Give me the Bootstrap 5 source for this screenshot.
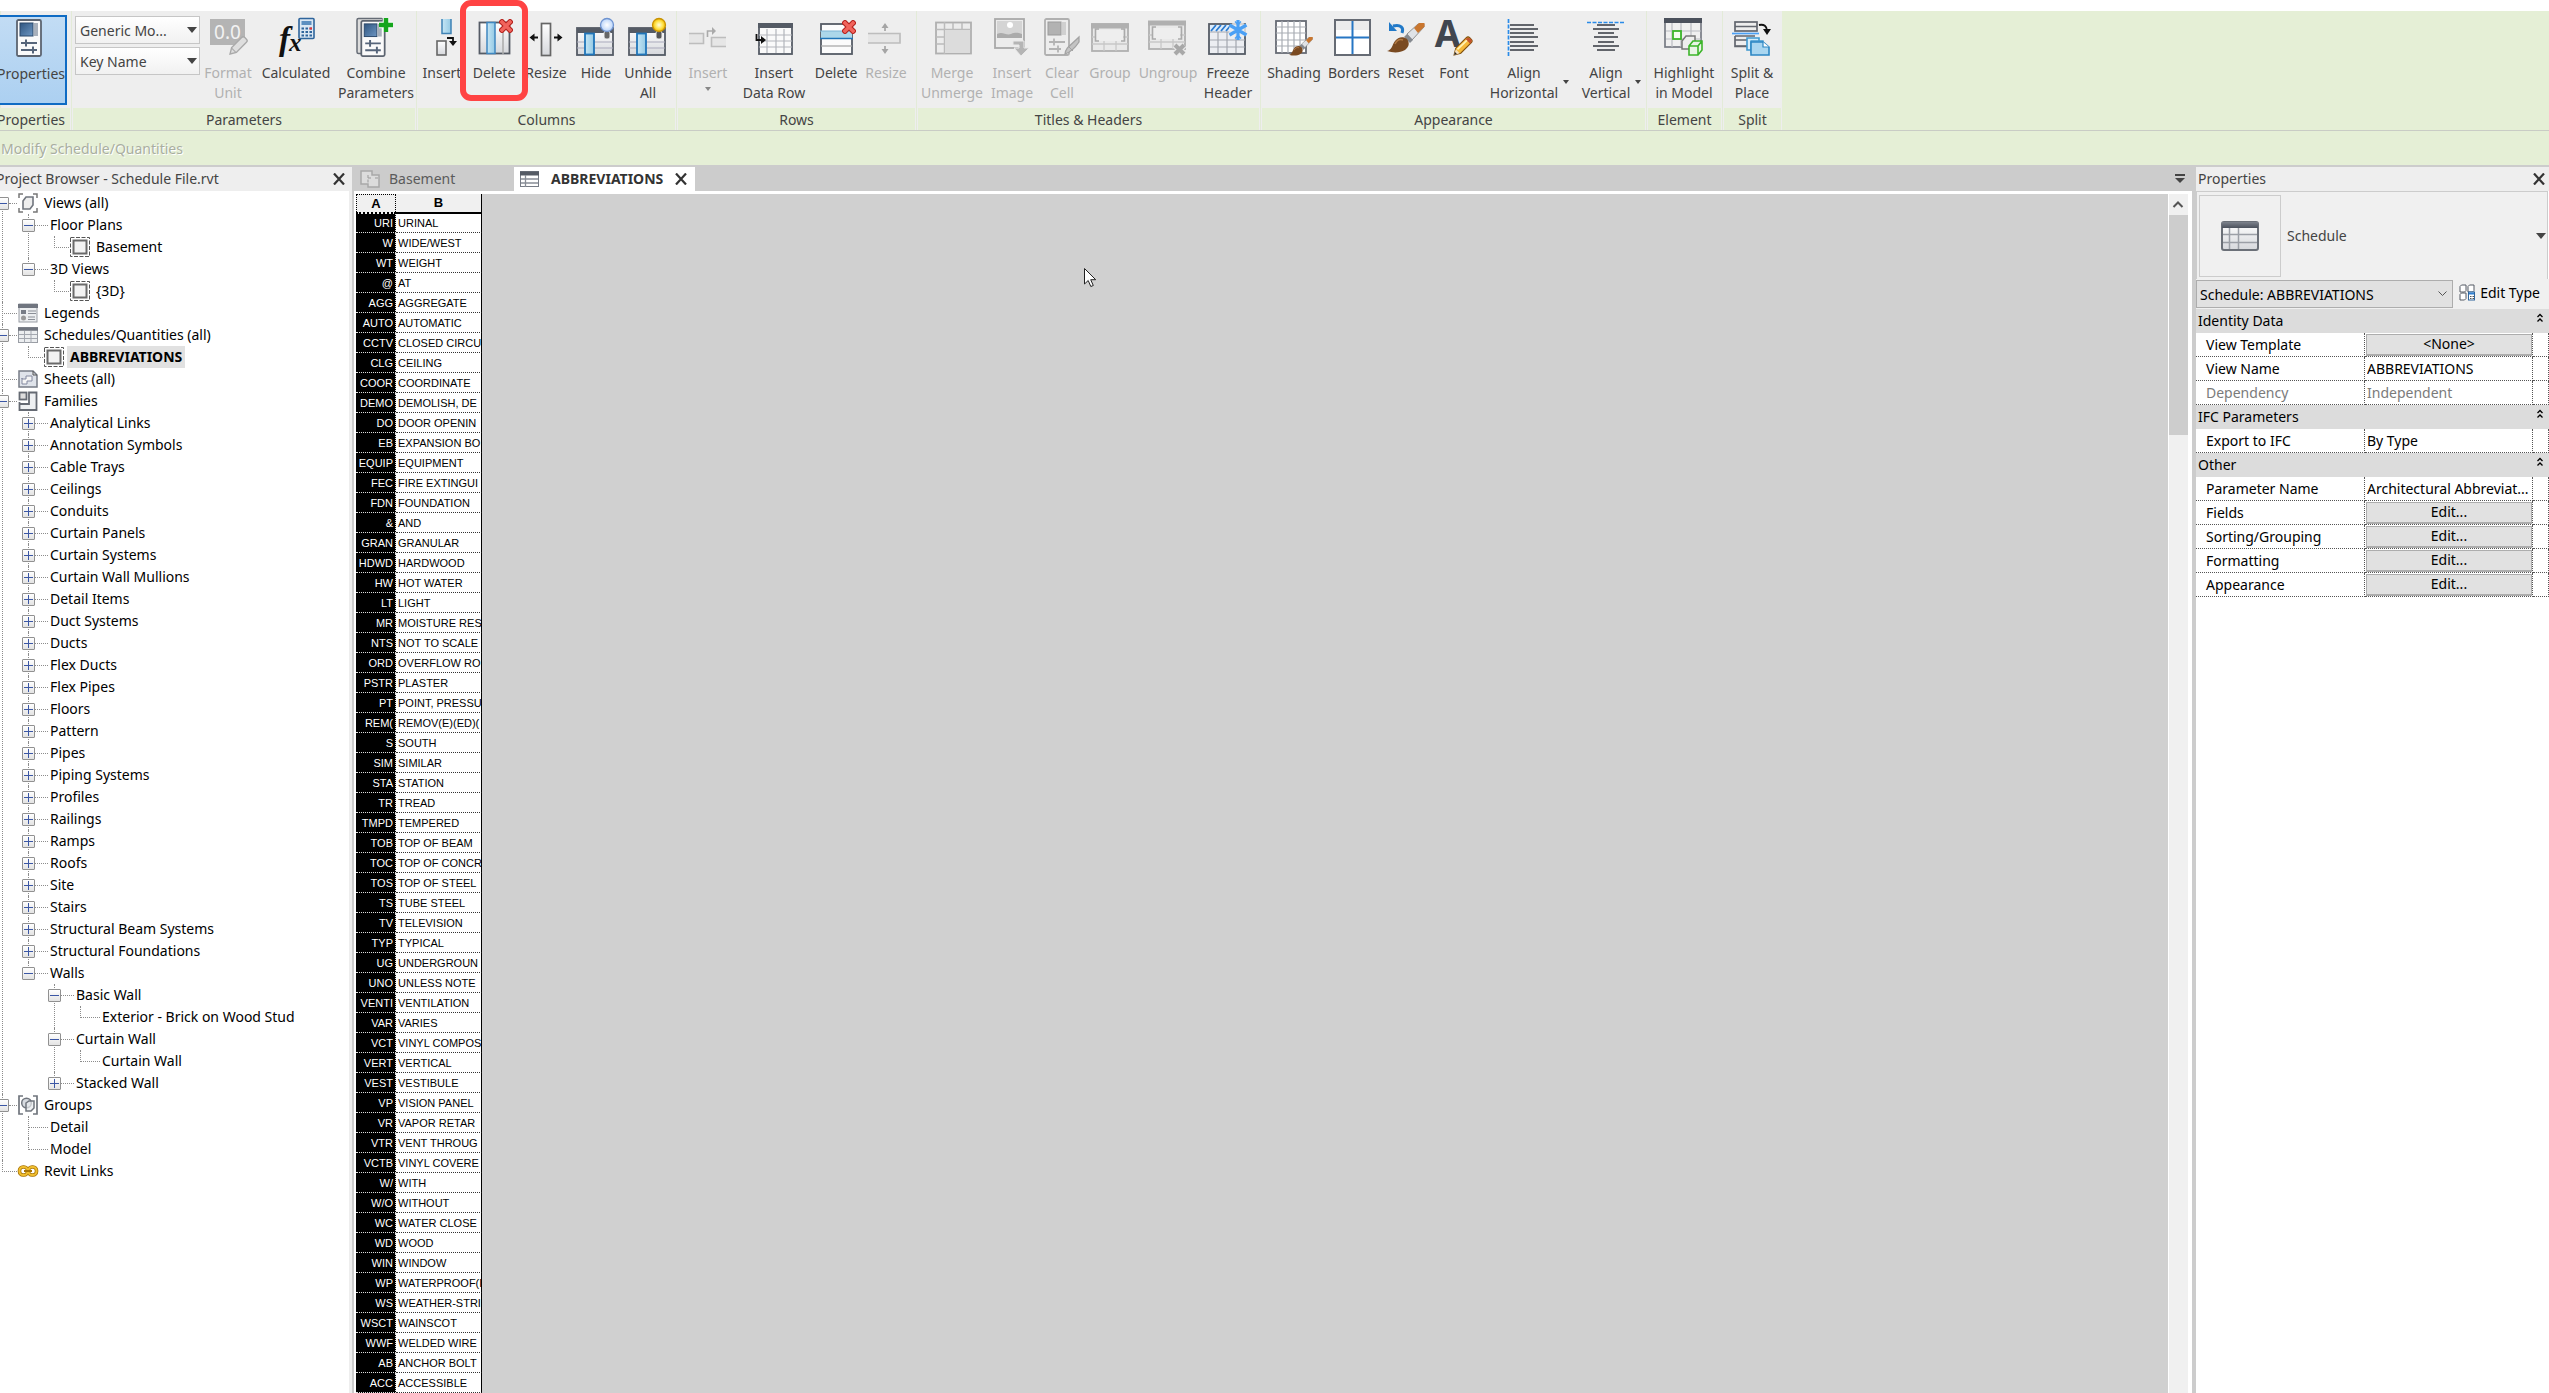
<!DOCTYPE html>
<html lang="en">
<head>
<meta charset="utf-8">
<meta name="viewport" content="width=device-width, initial-scale=1">
<title>Modify Schedule/Quantities</title>
<link href="https://cdn.jsdelivr.net/npm/bootstrap@5.3.0/dist/css/bootstrap.min.css" rel="stylesheet">
<style>
:root{--green:#e5efd6;--bar:#eee;--line:#ccc;--ink:#444}
body{font:14px/20px "Noto Sans","Open Sans",sans-serif;color:#000;background:#fff}
button,select,input{font:inherit;color:inherit}
svg{display:block;flex:none;overflow:visible}
ul{list-style:none;margin:0;padding:0}
/* ribbon */
.ribbon{margin-top:11px;background:var(--green);border-bottom:1px solid #c9ccc5;color:var(--ink)}
.rpanel{background:var(--bar);box-shadow:inset 1px 0 #e3ebd8;padding-top:1px}
.rpanel>div:first-child{height:96px}
.rpanel>.rlabel{height:22px;line-height:24px;background:var(--green);margin:0 1px 0 2px;text-align:center}
.rpanel:first-child>.rlabel{margin-left:-8px}
.rpanel>.inset{padding:0 4px 0 2px}
.tool{border:0;background:none;padding:5px 0 0;display:flex;flex-direction:column;align-items:center;white-space:nowrap;line-height:20px;position:relative}
.tool span{margin-top:6px}
.tool[disabled]{color:#b1b1b1}
.tool.on{background:linear-gradient(#c2dcf4,#acd0f1);border:2px solid #0f6bc4;padding-top:1px;height:90px;width:72px;margin:3px 4px 0 -5px}
.t44{width:44px}.t48{width:48px}.t52{width:52px}.t56{width:56px}.t60{width:60px}.t64{width:64px}.t72{width:72px}.t76{width:76px}.t80{width:80px}.t92{width:92px}
.hasdrop::after,.pick::after,.sdrop::after{content:"";border:3px solid transparent;border-top:4px solid #444;border-bottom:0}
.hasdrop::after{position:absolute;right:1px;top:68px}
.below::after{position:static;border-top-color:#888;margin-top:4px}
.marker{position:absolute;inset:-12px -8px auto -8px;height:101px;border:6px solid #ff4343;border-radius:11px;z-index:3}
.picks{padding:4px 0 0 4px;width:129px;gap:3px}
.pick{position:relative}
.pick select{appearance:none;width:125px;height:28px;border:1px solid #c6c6c6;background:linear-gradient(#fff,#f1f1f1);padding:2px 4px 0;border-radius:0}
.pick::after{position:absolute;right:3px;top:11px;border-width:6px 5px 0;pointer-events:none}
.options{height:34px;background:var(--green);padding:8px 1px;color:#a9aea1;text-shadow:1px 1px #fff}
/* docked panes */
.work{background:#ccc;padding-top:2px;min-height:0}
.browser{width:352px;background:#fff;border-right:3px solid #eee}
.bar{height:24px;background:var(--bar);color:var(--ink);padding-left:2px}
.closer{border:0;background:none;padding:0;margin-right:4px}
.browser .bar{padding-left:0;margin-right:-3px;white-space:nowrap}
.browser .bar span{margin-left:-4px}
.browser .closer{margin-right:7px}
/* tree */
.tree{margin:1px 0 0 2px}
.tree ul{margin-left:26px}
.tree li{position:relative}
.tree li::before{content:"";position:absolute;left:0;top:0;bottom:0;border-left:1px dotted #8c8c8c}
.tree li:last-child::before{bottom:auto;height:12px}
.tree>li:first-child::before{top:12px}
.node{display:flex;align-items:center;height:22px;position:relative;white-space:nowrap}
.node::before{content:"";width:20px;border-top:1px dotted #8c8c8c;margin-right:2px}
.node:has(svg)::before{width:15px;margin-right:1px}
.node svg{margin-right:6px}
.node.x::before{width:13px}
.node.x:has(svg)::before{width:8px}
.node .ex{order:-1}
.ex{width:13px;height:13px;margin:0 0 0 -6px;border:1px solid #919191;border-radius:1px;padding:0;background:linear-gradient(#fff,#e3e3e3);position:relative}
.ex::before,.ex.plus::after{content:"";position:absolute;left:1px;top:5px;width:9px;height:1px;background:#3b57a5}
.ex.plus::after{left:5px;top:1px;width:1px;height:9px}
.sel{background:#e1e1e1;padding:0 3px;margin-left:-3px;font-weight:700;line-height:22px}
/* canvas */
.doc{padding-left:2px;min-width:0}
.tabs{height:24px}
.dtab{color:#5b5b5b;height:24px;padding-left:6px;width:160px;gap:9px;text-decoration:none}
.dtab.cur{background:#fff;color:#333;font-weight:700;width:auto;gap:12px;padding-right:8px}
.sdrop{width:10px;margin-right:7px;border-top:2px solid #444;height:10px;display:flex;justify-content:center;padding-top:2px}
.sdrop::after{border-width:5px 5px 0}
.sheet{background:#d0d0d0;border-top:3px solid #fff;border-left:2px solid #fff;min-height:0;position:relative}
.grid{table-layout:fixed;width:126px;border-collapse:separate;border-spacing:0;font:11px/19px "Liberation Sans",Arial,sans-serif}
.grid td,.grid tbody th{height:20px;padding:1px 0 0 2px;line-height:18px;overflow:hidden;white-space:nowrap;border-bottom:1px dotted #333;background:#fff;border-right:1px solid #000}
.grid tbody th{background:#000;color:#fff;font-weight:400;text-align:right;padding:1px 2px 0 0;border-bottom-color:#ddd;border-right:1px dotted #ddd}
.grid tbody tr:first-child>*{height:19px;line-height:17px}
.grid thead th{height:20px;line-height:18px;font-size:13px;text-align:center;padding:0;background:#f0f0f0;border-bottom:2px solid #000;border-right:1px solid #000}
.grid thead th:first-child{border:1px dotted #000;border-bottom-width:2px;line-height:17px}
.grid .ca{width:40px}
.vscroll{width:24px;background:#f0f0f0;border-left:1px solid #fff;border-right:4px solid #fff}
.vscroll .up{height:21px;border:0;background:none;padding:0 0 0 4px}
.vscroll .thumb{height:220px;background:#cdcdcd}
.pointer{position:absolute;left:728px;top:74px}
/* properties */
.props{width:357px;background:#fff;border-left:4px solid #ccc}
.typebox{background:#f0f0f0;border:1px solid #ccc;border-width:1px 1px 0;height:88px;padding:3px 1px 3px 2px;color:var(--ink);margin-right:1px}
.thumbbox{width:82px;height:82px;border:1px solid #ccc;display:flex;align-items:center;justify-content:center;margin-right:6px}
.inst{background:#f0f0f0;height:30px}
.inst select{appearance:none;width:257px;height:28px;border:1px solid #adadad;background:#e1e1e1;padding:1px 3px 0;border-radius:0}
.inst label{position:relative}
.inst label svg{position:absolute;right:6px;top:11px}
.edit{border:0;background:none;padding:0;gap:4px;margin:-3px 9px 0 5px}
.plist{table-layout:fixed;width:100%;border-collapse:separate;border-spacing:0}
.plist th{font-weight:400}
.plist td,.plist tbody th{height:24px;padding:0 0 0 10px;line-height:22px;border-bottom:1px dotted #555;border-right:1px dotted #555;white-space:nowrap;overflow:hidden}
.plist td{padding-left:2px}
.plist tr.sec th{background:#dcdcdc;border:0;padding-left:2px;line-height:24px}
.plist tr.sec svg{float:right;margin:4px 6px 0 0}
.plist td button{display:block;width:166px;height:22px;line-height:18px;background:#e1e1e1;border:1px solid #adadad;border-bottom-width:2px;padding:0;margin-left:-1px}
.plist input{border:0;padding:0;width:100%;height:22px;display:block;background:none}
.plist .dim{color:#7b7b7b}
</style>
<script src="https://cdn.jsdelivr.net/npm/bootstrap@5.3.0/dist/js/bootstrap.bundle.min.js"></script>
</head>
<body class="vh-100 d-flex flex-column overflow-hidden">
<svg width="0" height="0" class="position-absolute" aria-hidden="true">
<defs>
<linearGradient id="gw" x2="0" y2="1"><stop stop-color="#fff"/><stop offset="1" stop-color="#d6d8dc"/></linearGradient>
<linearGradient id="gh" x2="0" y2="1"><stop stop-color="#7d828c"/><stop offset="1" stop-color="#4b515c"/></linearGradient>
<linearGradient id="gb" x2="1" y2="1"><stop stop-color="#2f5580"/><stop offset="1" stop-color="#6d96c2"/></linearGradient>
<linearGradient id="gl" x2="1" y2="0"><stop stop-color="#c6e6f5"/><stop offset="1" stop-color="#94c9e4"/></linearGradient>
<radialGradient id="by"><stop stop-color="#fffde0"/><stop offset=".6" stop-color="#ffe34a"/><stop offset="1" stop-color="#efb500"/></radialGradient>
<radialGradient id="bb"><stop stop-color="#fff"/><stop offset="1" stop-color="#b9d4fa"/></radialGradient>
<symbol id="xx" viewBox="0 0 14 14"><path d="M3 3l8 8M11 3l-8 8" stroke="#b3221d" stroke-width="5.6" stroke-linecap="square"/><path d="M3 3l8 8M11 3l-8 8" stroke="#f1645c" stroke-width="3.4" stroke-linecap="square"/></symbol>
<symbol id="brush" viewBox="0 0 38 30"><path d="M20 11l11-10h6v3L25 17z" fill="#dfe2e6" stroke="#777" stroke-width=".8"/><path d="M27 5l5-5h5.500v3.500L31 10z" fill="#c9762e"/><path d="M20 11l6 6-3 3-6-6z" fill="#85898f"/><path d="M0 28c5-1 5-6 8-10 3-4 8-5 12-2 3 4 2 8-2 11-5 3-12 3-18 1z" fill="#7a4a21"/><path d="M8 21c2-4 5-5 8-4" stroke="#b27a44" stroke-width="1.500" fill="none"/></symbol>
<symbol id="pencil" viewBox="0 0 18 18"><path d="M1 17l1.500-6L12 1.500c1-1 2-1 3 0l1.500 1.500c1 1 1 2 0 3L7 15.500z" fill="#f6b93a" stroke="#80500f"/><path d="M11 2.500l4.500 4.500 1-1.500c1-1 .5-2-.5-3L14 1.500z" fill="#c2542c"/><path d="M4 12L12.500 4" stroke="#fff3b5" stroke-width="1.600"/><path d="M1 17l1.500-5 3.500 3.500z" fill="#f4e0c0"/><path d="M1 17l.8-2.500 1.700 1.700z" fill="#222"/></symbol>
<symbol id="gpencil" viewBox="0 0 18 18"><path d="M1 17l1.500-6L12 1.500c1-1 2-1 3 0l1.500 1.500c1 1 1 2 0 3L7 15.500z" fill="#dedede" stroke="#a9a9a9" stroke-width="1.300"/><path d="M2.500 11.500l4 4" stroke="#a9a9a9"/></symbol>
<symbol id="sched" viewBox="0 0 38 30"><rect x="1" y="1" width="36" height="28" rx="2" fill="url(#gw)" stroke="#6b7078" stroke-width="2"/><rect x="1" y="1" width="36" height="6" fill="url(#gh)"/><path d="M2 13.500h34M2 21.500h34" stroke="#9b9fa6" stroke-width="1.500"/><path d="M8.500 7v21M17.500 7v21" stroke="#9b9fa6" stroke-width="1.500"/></symbol>
<symbol id="view" viewBox="0 0 20 20"><rect x=".5" y=".5" width="19" height="19" fill="none" stroke="#555" stroke-dasharray="4 1.500"/><rect x="3.500" y="3.500" width="13" height="13" fill="#f3f3f3" stroke="#6a6a6a" stroke-width="2"/></symbol>
<symbol id="close" viewBox="0 0 12 12"><path d="M1 .5l10 11M11 .5L1 11.500" stroke="#333" stroke-width="2.200"/></symbol>
<symbol id="dbl" viewBox="0 0 6 10"><path d="M.5 4L3 1.500 5.500 4M.5 8.500L3 6l2.500 2.500" fill="none" stroke="#000" stroke-width="1.300"/></symbol>
<symbol id="doc" viewBox="0 0 26 38"><rect x="1" y="1" width="24" height="36" rx="1.500" fill="#fafafa" stroke="#5c6470" stroke-width="1.800"/><rect x="4" y="4" width="13" height="13" fill="url(#gb)" stroke="#2b486a"/><path d="M20 4v13" stroke="#a8b0bb" stroke-width="4"/><path d="M5 24h16M5 31h16M10 20.500v7M17 27.500v7" stroke="#56657a" stroke-width="2"/></symbol>
<symbol id="gdoc" viewBox="0 0 26 38"><rect x="1" y="1" width="24" height="36" rx="1.500" fill="#ededed" stroke="#b0b0b0" stroke-width="1.800"/><rect x="4" y="4" width="13" height="13" fill="#b2b2b2" stroke="#9b9b9b"/><path d="M20 4v13" stroke="#d0d0d0" stroke-width="4"/><path d="M5 24h16M5 31h12M10 20.500v7M14 27.500v7" stroke="#b3b3b3" stroke-width="1.800"/></symbol>
</defs></svg>

<header class="ribbon d-flex">
 <section class="rpanel"><div class="d-flex"><button class="tool on"><svg width="40" height="40" viewBox="0 0 40 40"><use href="#doc" x="5" y="1" width="26" height="38"/></svg><span>Properties</span></button></div><div class="rlabel">Properties</div></section>
 <section class="rpanel"><div class="d-flex">
  <div class="picks d-flex flex-column"><label class="pick"><select aria-label="Parameter category"><option>Generic Mo...</option></select></label><label class="pick"><select aria-label="Parameter"><option>Key Name</option></select></label></div>
  <button class="tool t56" disabled><svg width="40" height="40"><rect x="2" y="2" width="35" height="26" fill="#b4b4b4"/><text x="19.500" y="22" font-size="19" fill="#f2f2f2" text-anchor="middle">0.0</text><use href="#gpencil" x="21" y="19" width="19" height="19"/></svg><span>Format<br>Unit</span></button>
  <button class="tool t80"><svg width="40" height="40"><text x="3" y="33" font-family="Liberation Serif,serif" font-style="italic" font-weight="700" font-size="33" fill="#111">f</text><text x="13" y="34" font-family="Liberation Serif,serif" font-style="italic" font-weight="700" font-size="25" fill="#111">x</text><rect x="23" y="1.500" width="15" height="20" rx="1" fill="#dbe7f3" stroke="#2f659c" stroke-width="1.600"/><rect x="25.500" y="4" width="10" height="4" fill="#5d8fc0"/><path d="M25.500 11.500h2.500m1.500 0h2.500m1.500 0h2.500M25.500 15h2.500m1.500 0h2.500m1.500 0h2.500M25.500 18.500h2.500m1.500 0h2.500m1.500 0h2.500" stroke="#2f659c" stroke-width="2"/><path d="M33.500 11.500h2.500" stroke="#e33" stroke-width="2"/></svg><span>Calculated</span></button>
  <button class="tool t80"><svg width="40" height="40"><rect x="1" y="1.500" width="26" height="35" rx="1.500" fill="#ddd" stroke="#666c76" stroke-width="1.500"/><use href="#doc" x="4" y="3" width="26" height="37"/><path d="M30 1v14M23 8h14" stroke="#fff" stroke-width="6.500"/><path d="M30 1v14M23 8h14" stroke="#15a51c" stroke-width="4.500"/></svg><span>Combine<br>Parameters</span></button>
 </div><div class="rlabel">Parameters</div></section>
 <section class="rpanel"><div class="d-flex">
  <button class="tool t52"><svg width="40" height="40"><path d="M20 2v14.500h9V2" fill="url(#gl)" stroke="#3f82b5" stroke-width="1.500"/><rect x="15" y="24" width="9" height="14" fill="url(#gw)" stroke="#666" stroke-width="1.600"/><path d="M25 21h6v5" fill="none" stroke="#111" stroke-width="1.800"/><path d="M27 24h8l-4 5z" fill="#111"/></svg><span>Insert</span></button>
  <button class="tool t52"><svg width="40" height="40"><rect x="5.500" y="5.500" width="30" height="31" fill="url(#gw)" stroke="#555b65" stroke-width="1.800"/><path d="M29 6v31" stroke="#aaa" stroke-width="1.500"/><rect x="13" y="5.500" width="8" height="31" fill="url(#gl)" stroke="#3f87c0" stroke-width="1.500"/><use href="#xx" x="25" y="2" width="14" height="14"/></svg><span>Delete</span><i class="marker"></i></button>
  <button class="tool t52"><svg width="40" height="40"><rect x="15.500" y="6.500" width="9" height="32" fill="url(#gw)" stroke="#666" stroke-width="1.700"/><path d="M5 20.500h7M28 20.500h7" stroke="#111" stroke-width="1.800"/><path d="M3.500 20.500l5-4v8zM36.500 20.500l-5-4v8z" fill="#111"/></svg><span>Resize</span></button>
  <button class="tool t48"><svg width="40" height="40"><rect x="1" y="11" width="36" height="27" fill="url(#gw)" stroke="#555b65" stroke-width="1.800"/><path d="M1 25h36M1 31h36" stroke="#aab" stroke-width="1.200"/><path d="M1 13.500h36" stroke="#555b65" stroke-width="5"/><rect x="9" y="16.500" width="9" height="21" fill="url(#gl)" stroke="#1f74b8" stroke-width="1.800"/><rect x="28" y="14" width="6" height="8" rx="2" fill="#666" stroke="#eee"/><circle cx="31" cy="8" r="6.500" fill="url(#bb)" stroke="#6e93d0" stroke-width="1.300"/></svg><span>Hide</span></button>
  <button class="tool t56"><svg width="40" height="40"><rect x="1" y="11" width="36" height="27" fill="url(#gw)" stroke="#555b65" stroke-width="1.800"/><path d="M1 25h36M1 31h36" stroke="#aab" stroke-width="1.200"/><path d="M1 13.500h36" stroke="#555b65" stroke-width="5"/><rect x="9" y="16.500" width="9" height="21" fill="url(#gl)" stroke="#1f74b8" stroke-width="1.800"/><rect x="28" y="14" width="6" height="8" rx="2" fill="#555" stroke="#eee"/><circle cx="31" cy="8" r="6.500" fill="url(#by)" stroke="#c89200" stroke-width="1.300"/></svg><span>Unhide<br>All</span></button>
 </div><div class="rlabel">Columns</div></section>
 <section class="rpanel"><div class="d-flex px-1">
  <button class="tool t56 hasdrop below" disabled><svg width="40" height="40"><path d="M1 16.500h14.500v10H1M38 20.500H23.500v9H38" fill="#e6e6e6" stroke="#bdbdbd" stroke-width="1.600"/><path d="M19.500 20v-6h5" fill="none" stroke="#aaa" stroke-width="1.600"/><path d="M24 10l4 4-4 4z" fill="#aaa"/></svg><span>Insert</span></button>
  <button class="tool t76"><svg width="40" height="40"><rect x="5" y="7" width="33" height="30" fill="#fafafa" stroke="#555b65" stroke-width="1.800"/><path d="M13 12v24M22 12v24M30 12v24M5 18h33M5 24h33M5 30h33" stroke="#b3b6bc" stroke-width="1.200"/><path d="M4 8.500h35" stroke="#555b65" stroke-width="5"/><path d="M2.500 17v6h6" fill="none" stroke="#111" stroke-width="1.800"/><path d="M7 19l5 4-5 4z" fill="#111"/></svg><span>Insert<br>Data Row</span></button>
  <button class="tool t48"><svg width="40" height="40"><rect x="5" y="7" width="31" height="30" fill="#fcfcfc" stroke="#555b65" stroke-width="1.800"/><path d="M5 29h31" stroke="#aaa" stroke-width="1.300"/><rect x="5" y="14" width="31" height="7" fill="#acd7ea"/><path d="M4 21.500h33" stroke="#1f74b8" stroke-width="1.600"/><path d="M4 14h33" stroke="#7fb6d6"/><use href="#xx" x="26" y="3" width="14" height="14"/></svg><span>Delete</span></button>
  <button class="tool t52" disabled><svg width="40" height="40"><path d="M2 16.500h32v9.500H2" fill="#e6e6e6" stroke="#bdbdbd" stroke-width="1.700"/><path d="M19 9v5M19 29v5" stroke="#a5a5a5" stroke-width="1.700"/><path d="M15.500 11l3.500-5 3.500 5zM15.500 32l3.500 5 3.500-5z" fill="#a5a5a5"/></svg><span>Resize</span></button>
 </div><div class="rlabel">Rows</div></section>
 <section class="rpanel"><div class="d-flex px-1">
  <button class="tool t64" disabled><svg width="40" height="40"><rect x="4" y="5.500" width="35" height="31" fill="#ececec" stroke="#b0b0b0" stroke-width="1.800"/><path d="M12.500 5v32M4 12.500h35M21 6v6M30 6v6M4 20h8M4 27h8" stroke="#bbb" stroke-width="1.500"/><rect x="13" y="13" width="25" height="23" fill="#dcdcdc"/></svg><span>Merge<br>Unmerge</span></button>
  <button class="tool t56" disabled><svg width="40" height="40"><rect x="3" y="2" width="29" height="29" fill="#ececec" stroke="#a9a9a9" stroke-width="1.800"/><rect x="5" y="4" width="25" height="16" fill="#d4d4d4"/><circle cx="18" cy="8" r="3" fill="#fff"/><path d="M5 17c6-3 9 2 14 0s7-1 11 0v4H5z" fill="#ababab"/><path d="M21 24h11v7h5l-8 8-7-8h5v-3h-6z" fill="#b5b5b5" stroke="#e9e9e9"/></svg><span>Insert<br>Image</span></button>
  <button class="tool t44" disabled><svg width="40" height="40"><use href="#gdoc" x="2" y="1" width="26" height="38"/><path d="M23 37c1-7 5-8 14-17v5c-4 6-8 10-14 12z" fill="#c4c4c4" stroke="#a3a3a3" stroke-width="1.300"/><path d="M27 30l4 4" stroke="#a3a3a3"/></svg><span>Clear<br>Cell</span></button>
  <button class="tool t52" disabled><svg width="40" height="40"><rect x="2" y="7" width="36" height="27" fill="#e9e9e9" stroke="#b0b0b0" stroke-width="1.800"/><path d="M1 9h38" stroke="#b0b0b0" stroke-width="5"/><path d="M2 27h36M14 24v10M26 24v10M2 20h36" stroke="#c8c8c8" stroke-width="1.300"/><rect x="6" y="13" width="27" height="11" fill="#eee"/><path d="M9 12H5.500v12H9M31 12h3.500v12H31" fill="none" stroke="#aaa" stroke-width="1.600"/></svg><span>Group</span></button>
  <button class="tool t64" disabled><svg width="40" height="40"><rect x="1" y="5" width="36" height="27" fill="#e9e9e9" stroke="#b0b0b0" stroke-width="1.800"/><path d="M0 6h38" stroke="#b0b0b0" stroke-width="5"/><path d="M1 25h36M13 22v10M25 22v10M1 18h36" stroke="#c8c8c8" stroke-width="1.300"/><rect x="5" y="11" width="27" height="11" fill="#eee"/><path d="M8 10H4.500v12H8M30 10h3.500v12H30" fill="none" stroke="#aaa" stroke-width="1.600"/><path d="M27 28l9 9M36 28l-9 9" stroke="#e9e9e9" stroke-width="6.500"/><path d="M27 28l9 9M36 28l-9 9" stroke="#a8a8a8" stroke-width="4"/></svg><span>Ungroup</span></button>
  <button class="tool t56"><svg width="40" height="40"><rect x="1" y="7" width="36" height="30" fill="#eceef2" stroke="#555b65" stroke-width="1.800"/><path d="M2 15h35M2 23h35M2 30h35M10 15v21M19 15v21M28 15v21" stroke="#a3a7af" stroke-width="1.200"/><rect x="2" y="8" width="34" height="6" fill="#dcecfb"/><path d="M3 14l5-6M8 14l5-6M13 14l5-6M18 14l5-6" stroke="#2b7bd0" stroke-width="1.800"/><circle cx="30" cy="13" r="9" fill="#eee" opacity=".8"/><path d="M30 3v20M21.500 8l17 10M38.500 8l-17 10" stroke="#4aa0f5" stroke-width="3.200"/><path d="M27 4.500l3 3 3-3M27 21.500l3-3 3 3" stroke="#4aa0f5" stroke-width="1.500" fill="none"/></svg><span>Freeze<br>Header</span></button>
 </div><div class="rlabel">Titles &amp; Headers</div></section>
 <section class="rpanel"><div class="d-flex inset">
  <button class="tool t64"><svg width="40" height="40"><rect x="2" y="4" width="30" height="32" fill="#fff" stroke="#666b74" stroke-width="1.800"/><path d="M8 4v32M14 4v32M20 4v32M26 4v32M2 10h30M2 16h30M2 23h30M2 29h30" stroke="#a9adb4" stroke-width="1.200"/><use href="#brush" x="15" y="20" width="24" height="19"/></svg><span>Shading</span></button>
  <button class="tool t56"><svg width="40" height="40"><rect x="1" y="3" width="35" height="35" fill="#fff" stroke="#666b74" stroke-width="2"/><rect x="2" y="4" width="33" height="9" fill="#ececec"/><path d="M18.500 4v33M2 20.500h33" stroke="#2676c4" stroke-width="2"/></svg><span>Borders</span></button>
  <button class="tool t48"><svg width="40" height="40"><path d="M16 16c2-5-1-9-9-7" stroke="#2179c8" stroke-width="3" fill="none"/><path d="M3 5v9h8z" fill="#2179c8"/><use href="#brush" x="1" y="6" width="38" height="30"/></svg><span>Reset</span></button>
  <button class="tool t48"><svg width="40" height="40"><text x="13.500" y="30" font-family="Noto Sans,sans-serif" font-weight="700" font-size="37" text-anchor="middle" fill="#41464f">A</text><use href="#pencil" x="19" y="19" width="20" height="20"/></svg><span>Font</span></button>
  <button class="tool t92 hasdrop"><svg width="40" height="40"><path d="M4.500 2v37" stroke="#2a8be8" stroke-width="1.700" stroke-dasharray="4 1.500"/><path d="M6 8h24M6 12h28M6 16h24M6 20h28M6 25h24M6 29h28M6 33h24" stroke="#62656b" stroke-width="1.800"/></svg><span>Align<br>Horizontal</span></button>
  <button class="tool t72 hasdrop"><svg width="40" height="40"><path d="M1 5.500h38" stroke="#2a8be8" stroke-width="1.700" stroke-dasharray="4 1.500"/><path d="M11 8h18M7 12h26M12 16h16M8 20h24M12 25h16M7 29h26M11 33h18" stroke="#62656b" stroke-width="1.800"/></svg><span>Align<br>Vertical</span></button>
 </div><div class="rlabel">Appearance</div></section>
 <section class="rpanel"><div class="d-flex">
  <button class="tool t76"><svg width="40" height="40"><rect x="1" y="2" width="36" height="28" fill="#f0f0f0" stroke="#777b84" stroke-width="1.700"/><path d="M2 14h35M2 22h35M8 6v24M17 6v24M27 6v24" stroke="#b9bcc2" stroke-width="1.200"/><path d="M0 3.500h38" stroke="#4b515c" stroke-width="5"/><rect x="9" y="14" width="8" height="8" fill="#f3fff0" stroke="#3cb52a" stroke-width="1.800"/><path d="M18 24l4-5h9v8l-3 5H18z" fill="#eee" stroke="#777" stroke-width="1.500"/><path d="M25 29l4-5h9v9l-4 5h-9zM25 29h9v9M34 29l4-5" fill="#e9f5e6" stroke="#3cb52a" stroke-width="1.600"/></svg><span>Highlight<br>in Model</span></button>
 </div><div class="rlabel">Element</div></section>
 <section class="rpanel"><div class="d-flex">
  <button class="tool t60"><svg width="40" height="40"><rect x="3" y="5" width="22" height="9" fill="#eee" stroke="#62666e" stroke-width="1.700"/><path d="M3 9.500h22M3 23h14M3 29h12" stroke="#62666e" stroke-width="1.400"/><path d="M3 19v10.500h12M3 19h20" fill="none" stroke="#62666e" stroke-width="1.700"/><path d="M0 16.500h27" stroke="#4aa0f5" stroke-width="1.700"/><path d="M27 8c5-1 8 1 8 6" fill="none" stroke="#111" stroke-width="2"/><path d="M31 12h8l-4 6z" fill="#111"/><path d="M15 21h12v12H15z" fill="#d5edfa" stroke="#3f98cf" stroke-width="1.600"/><path d="M19 24h12v11H19z" fill="#d5edfa" stroke="#3f98cf" stroke-width="1.300"/><path d="M19 25h12l6 5v8H19z" fill="#a9d6f0" stroke="#2c87c4" stroke-width="1.600"/><path d="M31 25v5h6" fill="#fff" stroke="#2c87c4" stroke-width="1.200"/></svg><span>Split &amp;<br>Place</span></button>
 </div><div class="rlabel">Split</div></section>
</header>
<div class="options">Modify Schedule/Quantities</div>

<main class="work d-flex flex-grow-1">
<aside class="browser">
 <div class="bar d-flex align-items-center justify-content-between"><span>Project Browser - Schedule File.rvt</span><button class="closer" aria-label="Close project browser"><svg width="12" height="12"><use href="#close"/></svg></button></div>
 <ul class="tree">
  <li><div class="node x"><button class="ex" aria-label="Collapse"></button><svg width="20" height="20"><path d="M1 5V1h4M15 1h4v4M19 15v4h-4M5 19H1v-4" fill="none" stroke="#777" stroke-width="1.500"/><path d="M5 8l3-4h7v8l-3 4H5z" fill="#eee" stroke="#70757d" stroke-width="1.600"/></svg>Views (all)</div>
   <ul>
    <li><div class="node x"><button class="ex" aria-label="Collapse"></button>Floor Plans</div><ul><li><div class="node"><svg width="20" height="20"><use href="#view"/></svg>Basement</div></li></ul></li>
    <li><div class="node x"><button class="ex" aria-label="Collapse"></button>3D Views</div><ul><li><div class="node"><svg width="20" height="20"><use href="#view"/></svg>{3D}</div></li></ul></li>
   </ul></li>
  <li><div class="node"><svg width="20" height="20"><rect x="1" y="1" width="18" height="18" fill="#eceef0" stroke="#9a9ea5"/><path d="M0 3h20" stroke="#70757f" stroke-width="4"/><rect x="3" y="7" width="5" height="4" fill="#777c86"/><circle cx="5.500" cy="15" r="2.500" fill="#999"/><path d="M10 8h8M10 10.500h8M10 14h7M10 16.500h7" stroke="#8b8f97"/></svg>Legends</div></li>
  <li><div class="node x"><button class="ex" aria-label="Collapse"></button><svg width="20" height="16"><rect x=".5" y=".5" width="19" height="15" fill="#eceef0" stroke="#9a9ea5"/><path d="M0 2h20" stroke="#70757f" stroke-width="3.500"/><path d="M1 7.500h18M1 11.500h18M6.500 4v12M13 4v12" stroke="#a4a8b0"/></svg>Schedules/Quantities (all)</div>
   <ul><li><div class="node"><svg width="20" height="20"><use href="#view"/></svg><span class="sel">ABBREVIATIONS</span></div></li></ul></li>
  <li><div class="node"><svg width="20" height="18"><path d="M1 1h14l4 4v12H1z" fill="#dfe3ea" stroke="#777c86" stroke-width="1.500"/><path d="M15 1v4h4" fill="none" stroke="#555"/><path d="M4 8v6h5v-3h5V6H8v3H4z" fill="#f5f5f5" stroke="#8389a0"/></svg>Sheets (all)</div></li>
  <li><div class="node x"><button class="ex" aria-label="Collapse"></button><svg width="20" height="20"><path d="M1.500 11V19h17V1.500H11V13H1.500z" fill="#eef0f2" stroke="#656a73" stroke-width="1.800"/><rect x="1.500" y="1.500" width="7" height="7" fill="#ddd" stroke="#656a73" stroke-width="1.800"/></svg>Families</div>
   <ul>
    <li><div class="node x"><button class="ex plus" aria-label="Expand"></button>Analytical Links</div></li>
    <li><div class="node x"><button class="ex plus" aria-label="Expand"></button>Annotation Symbols</div></li>
    <li><div class="node x"><button class="ex plus" aria-label="Expand"></button>Cable Trays</div></li>
    <li><div class="node x"><button class="ex plus" aria-label="Expand"></button>Ceilings</div></li>
    <li><div class="node x"><button class="ex plus" aria-label="Expand"></button>Conduits</div></li>
    <li><div class="node x"><button class="ex plus" aria-label="Expand"></button>Curtain Panels</div></li>
    <li><div class="node x"><button class="ex plus" aria-label="Expand"></button>Curtain Systems</div></li>
    <li><div class="node x"><button class="ex plus" aria-label="Expand"></button>Curtain Wall Mullions</div></li>
    <li><div class="node x"><button class="ex plus" aria-label="Expand"></button>Detail Items</div></li>
    <li><div class="node x"><button class="ex plus" aria-label="Expand"></button>Duct Systems</div></li>
    <li><div class="node x"><button class="ex plus" aria-label="Expand"></button>Ducts</div></li>
    <li><div class="node x"><button class="ex plus" aria-label="Expand"></button>Flex Ducts</div></li>
    <li><div class="node x"><button class="ex plus" aria-label="Expand"></button>Flex Pipes</div></li>
    <li><div class="node x"><button class="ex plus" aria-label="Expand"></button>Floors</div></li>
    <li><div class="node x"><button class="ex plus" aria-label="Expand"></button>Pattern</div></li>
    <li><div class="node x"><button class="ex plus" aria-label="Expand"></button>Pipes</div></li>
    <li><div class="node x"><button class="ex plus" aria-label="Expand"></button>Piping Systems</div></li>
    <li><div class="node x"><button class="ex plus" aria-label="Expand"></button>Profiles</div></li>
    <li><div class="node x"><button class="ex plus" aria-label="Expand"></button>Railings</div></li>
    <li><div class="node x"><button class="ex plus" aria-label="Expand"></button>Ramps</div></li>
    <li><div class="node x"><button class="ex plus" aria-label="Expand"></button>Roofs</div></li>
    <li><div class="node x"><button class="ex plus" aria-label="Expand"></button>Site</div></li>
    <li><div class="node x"><button class="ex plus" aria-label="Expand"></button>Stairs</div></li>
    <li><div class="node x"><button class="ex plus" aria-label="Expand"></button>Structural Beam Systems</div></li>
    <li><div class="node x"><button class="ex plus" aria-label="Expand"></button>Structural Foundations</div></li>
    <li><div class="node x"><button class="ex" aria-label="Collapse"></button>Walls</div>
     <ul>
      <li><div class="node x"><button class="ex" aria-label="Collapse"></button>Basic Wall</div><ul><li><div class="node">Exterior - Brick on Wood Stud</div></li></ul></li>
      <li><div class="node x"><button class="ex" aria-label="Collapse"></button>Curtain Wall</div><ul><li><div class="node">Curtain Wall</div></li></ul></li>
      <li><div class="node x"><button class="ex plus" aria-label="Expand"></button>Stacked Wall</div></li>
     </ul></li>
   </ul></li>
  <li><div class="node x"><button class="ex" aria-label="Collapse"></button><svg width="20" height="20"><path d="M5 1H1v18h4M15 1h4v18h-4" fill="none" stroke="#70757d" stroke-width="1.700"/><circle cx="8.500" cy="8" r="4.800" fill="#d7dbe0" stroke="#70757d" stroke-width="1.500"/><path d="M8 8l3-2h5v7l-3 3H8z" fill="#e8ebee" fill-opacity=".7" stroke="#70757d" stroke-width="1.500"/></svg>Groups</div>
   <ul><li><div class="node">Detail</div></li><li><div class="node">Model</div></li></ul></li>
  <li><div class="node"><svg width="20" height="12"><rect x="1.500" y="2" width="8" height="8" rx="3.500" fill="none" stroke="#a87406" stroke-width="3.600"/><rect x="10.500" y="2" width="8" height="8" rx="3.500" fill="none" stroke="#a87406" stroke-width="3.600"/><rect x="1.500" y="2" width="8" height="8" rx="3.500" fill="none" stroke="#f0be2e" stroke-width="2"/><rect x="10.500" y="2" width="8" height="8" rx="3.500" fill="none" stroke="#f0be2e" stroke-width="2"/><path d="M6 6h8" stroke="#a87406" stroke-width="2"/></svg>Revit Links</div></li>
 </ul>
</aside>

<section class="doc d-flex flex-column flex-grow-1">
 <nav class="tabs d-flex align-items-center">
  <a href="#basement" class="dtab d-flex align-items-center"><svg width="20" height="18"><path d="M1 1h11v4h7v12H8v-3H1z" fill="#dcdcdc" stroke="#a8a8a8" stroke-width="1.500"/><path d="M8 5v9M8 8h4M15 8h4" stroke="#999" stroke-dasharray="3 1.500"/></svg>Basement</a>
  <a href="#abbreviations" class="dtab cur d-flex align-items-center"><svg width="19" height="16"><rect x=".5" y=".5" width="18" height="15" fill="#fff" stroke="#777c86"/><path d="M0 2.500h19" stroke="#555b65" stroke-width="4"/><path d="M1 8h17M1 12h17M5.500 4v12" stroke="#888d96" stroke-width="1.300"/></svg>ABBREVIATIONS<svg width="12" height="12"><use href="#close"/></svg></a>
  <button class="sdrop ms-auto border-start-0 border-end-0 border-bottom-0 bg-transparent px-0" aria-label="Open views"></button>
 </nav>
 <div class="sheet d-flex justify-content-between flex-grow-1 overflow-hidden">
  <div>
  <table class="grid">
   <colgroup><col class="ca"><col></colgroup>
   <thead><tr><th scope="col">A</th><th scope="col">B</th></tr></thead>
   <tbody>
    <tr><th>URI</th><td>URINAL</td></tr>
    <tr><th>W</th><td>WIDE/WEST</td></tr>
    <tr><th>WT</th><td>WEIGHT</td></tr>
    <tr><th>@</th><td>AT</td></tr>
    <tr><th>AGG</th><td>AGGREGATE</td></tr>
    <tr><th>AUTO</th><td>AUTOMATIC</td></tr>
    <tr><th>CCTV</th><td>CLOSED CIRCU</td></tr>
    <tr><th>CLG</th><td>CEILING</td></tr>
    <tr><th>COOR</th><td>COORDINATE</td></tr>
    <tr><th>DEMO</th><td>DEMOLISH, DE</td></tr>
    <tr><th>DO</th><td>DOOR OPENIN</td></tr>
    <tr><th>EB</th><td>EXPANSION BO</td></tr>
    <tr><th>EQUIP</th><td>EQUIPMENT</td></tr>
    <tr><th>FEC</th><td>FIRE EXTINGUI</td></tr>
    <tr><th>FDN</th><td>FOUNDATION</td></tr>
    <tr><th>&amp;</th><td>AND</td></tr>
    <tr><th>GRAN</th><td>GRANULAR</td></tr>
    <tr><th>HDWD</th><td>HARDWOOD</td></tr>
    <tr><th>HW</th><td>HOT WATER</td></tr>
    <tr><th>LT</th><td>LIGHT</td></tr>
    <tr><th>MR</th><td>MOISTURE RES</td></tr>
    <tr><th>NTS</th><td>NOT TO SCALE</td></tr>
    <tr><th>ORD</th><td>OVERFLOW RO</td></tr>
    <tr><th>PSTR</th><td>PLASTER</td></tr>
    <tr><th>PT</th><td>POINT, PRESSU</td></tr>
    <tr><th>REM(</th><td>REMOV(E)(ED)(</td></tr>
    <tr><th>S</th><td>SOUTH</td></tr>
    <tr><th>SIM</th><td>SIMILAR</td></tr>
    <tr><th>STA</th><td>STATION</td></tr>
    <tr><th>TR</th><td>TREAD</td></tr>
    <tr><th>TMPD</th><td>TEMPERED</td></tr>
    <tr><th>TOB</th><td>TOP OF BEAM</td></tr>
    <tr><th>TOC</th><td>TOP OF CONCR</td></tr>
    <tr><th>TOS</th><td>TOP OF STEEL</td></tr>
    <tr><th>TS</th><td>TUBE STEEL</td></tr>
    <tr><th>TV</th><td>TELEVISION</td></tr>
    <tr><th>TYP</th><td>TYPICAL</td></tr>
    <tr><th>UG</th><td>UNDERGROUN</td></tr>
    <tr><th>UNO</th><td>UNLESS NOTE</td></tr>
    <tr><th>VENTI</th><td>VENTILATION</td></tr>
    <tr><th>VAR</th><td>VARIES</td></tr>
    <tr><th>VCT</th><td>VINYL COMPOS</td></tr>
    <tr><th>VERT</th><td>VERTICAL</td></tr>
    <tr><th>VEST</th><td>VESTIBULE</td></tr>
    <tr><th>VP</th><td>VISION PANEL</td></tr>
    <tr><th>VR</th><td>VAPOR RETAR</td></tr>
    <tr><th>VTR</th><td>VENT THROUG</td></tr>
    <tr><th>VCTB</th><td>VINYL COVERE</td></tr>
    <tr><th>W/</th><td>WITH</td></tr>
    <tr><th>W/O</th><td>WITHOUT</td></tr>
    <tr><th>WC</th><td>WATER CLOSE</td></tr>
    <tr><th>WD</th><td>WOOD</td></tr>
    <tr><th>WIN</th><td>WINDOW</td></tr>
    <tr><th>WP</th><td>WATERPROOF(I</td></tr>
    <tr><th>WS</th><td>WEATHER-STRI</td></tr>
    <tr><th>WSCT</th><td>WAINSCOT</td></tr>
    <tr><th>WWF</th><td>WELDED WIRE</td></tr>
    <tr><th>AB</th><td>ANCHOR BOLT</td></tr>
    <tr><th>ACC</th><td>ACCESSIBLE</td></tr>
   </tbody>
  </table>
  </div>
  <div class="vscroll"><button class="up d-block" aria-label="Scroll up"><svg width="10" height="7"><path d="M.5 6L5 1.500 9.500 6" fill="none" stroke="#555" stroke-width="2"/></svg></button><div class="thumb"></div></div>
  <svg class="pointer" width="12" height="19"><path d="M.5.5v15.500l3.700-3.500 2.600 6 2.500-1-2.600-5.800h5z" fill="#fff" stroke="#222"/></svg>
 </div>
</section>

<aside class="props">
 <div class="bar d-flex align-items-center justify-content-between"><span>Properties</span><button class="closer" aria-label="Close properties"><svg width="12" height="12"><use href="#close"/></svg></button></div>
 <div class="typebox d-flex align-items-center"><div class="thumbbox"><svg width="38" height="30"><use href="#sched"/></svg></div>Schedule<svg class="ms-auto" width="10" height="6"><path d="M0 0h10L5 6z" fill="#444"/></svg></div>
 <div class="inst d-flex align-items-center justify-content-between"><label><select aria-label="Instance filter"><option>Schedule: ABBREVIATIONS</option></select><svg width="9" height="6"><path d="M.5.5l4 4 4-4" fill="none" stroke="#555"/></svg></label><button class="edit d-flex align-items-center"><svg width="17" height="17"><path d="M1 2.500L2.500 1H7v5.500L5.500 8H1zM9 2.500L10.500 1H15v5.500L13.500 8H9zM1 10.500L2.500 9H7v5.500L5.500 16H1z" fill="#fff" stroke="#555b65"/><rect x="9.500" y="8" width="6" height="8" fill="#fff" stroke="#2f659c"/><path d="M10 9.500h5" stroke="#2f7fd0" stroke-width="2"/><path d="M11 12.500h4M11 14.500h4" stroke="#555" stroke-dasharray="1 .5"/></svg>Edit Type</button></div>
 <table class="plist">
  <colgroup><col><col width="168"><col width="16"></colgroup>
  <tbody>
  <tr class="sec"><th colspan="3">Identity Data<svg width="6" height="10"><use href="#dbl"/></svg></th></tr>
  <tr><th>View Template</th><td><button>&lt;None&gt;</button></td><td></td></tr>
  <tr><th><label for="vn">View Name</label></th><td><input id="vn" value="ABBREVIATIONS"></td><td></td></tr>
  <tr class="dim"><th>Dependency</th><td>Independent</td><td></td></tr>
  <tr class="sec"><th colspan="3">IFC Parameters<svg width="6" height="10"><use href="#dbl"/></svg></th></tr>
  <tr><th>Export to IFC</th><td>By Type</td><td></td></tr>
  <tr class="sec"><th colspan="3">Other<svg width="6" height="10"><use href="#dbl"/></svg></th></tr>
  <tr><th>Parameter Name</th><td>Architectural Abbreviat...</td><td></td></tr>
  <tr><th>Fields</th><td><button>Edit...</button></td><td></td></tr>
  <tr><th>Sorting/Grouping</th><td><button>Edit...</button></td><td></td></tr>
  <tr><th>Formatting</th><td><button>Edit...</button></td><td></td></tr>
  <tr><th>Appearance</th><td><button>Edit...</button></td><td></td></tr>
  </tbody>
 </table>
</aside>
</main>
</body>
</html>
